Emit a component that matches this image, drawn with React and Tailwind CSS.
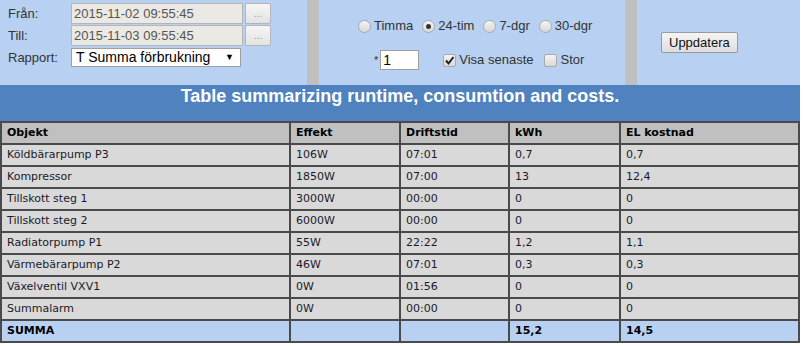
import React from 'react';

const rows = [
  { name: 'Köldbärarpump P3', effekt: '106W', tid: '07:01', kwh: '0,7', kost: '0,7' },
  { name: 'Kompressor', effekt: '1850W', tid: '07:00', kwh: '13', kost: '12,4' },
  { name: 'Tillskott steg 1', effekt: '3000W', tid: '00:00', kwh: '0', kost: '0' },
  { name: 'Tillskott steg 2', effekt: '6000W', tid: '00:00', kwh: '0', kost: '0' },
  { name: 'Radiatorpump P1', effekt: '55W', tid: '22:22', kwh: '1,2', kost: '1,1' },
  { name: 'Värmebärarpump P2', effekt: '46W', tid: '07:01', kwh: '0,3', kost: '0,3' },
  { name: 'Växelventil VXV1', effekt: '0W', tid: '01:56', kwh: '0', kost: '0' },
  { name: 'Summalarm', effekt: '0W', tid: '00:00', kwh: '0', kost: '0' },
];

const Radio = ({ label, checked }) => (
  <span className="flex items-center gap-[3px]">
    <span className="w-[13px] h-[13px] rounded-full border border-[#a9a9a9] bg-gradient-to-b from-[#f4f4f4] to-[#d8d8d8] flex items-center justify-center">
      {checked && <span className="w-[5px] h-[5px] rounded-full bg-[#333]" />}
    </span>
    <span>{label}</span>
  </span>
);

const Check = ({ label, checked }) => (
  <span className="flex items-center gap-[3px]">
    <span className="w-[13px] h-[13px] rounded-[2px] border border-[#a9a9a9] bg-gradient-to-b from-[#f4f4f4] to-[#d8d8d8] flex items-center justify-center">
      {checked && (
        <svg width="11" height="11" viewBox="0 0 11 11">
          <path d="M2 5.5 L4.5 8.5 L9.5 2" stroke="#222" strokeWidth="2" fill="none" />
        </svg>
      )}
    </span>
    <span>{label}</span>
  </span>
);

const DateField = ({ value }) => (
  <div className="flex gap-[2px]">
    <div className="w-[172px] h-[21px] border border-[#b5b5b5] bg-[#ebe9e4] text-[#555] pl-[2px] leading-[19px]">{value}</div>
    <div className="w-[26px] h-[21px] border border-[#b5b5b5] rounded-[2px] bg-gradient-to-b from-[#f6f6f6] to-[#e3e3e3] text-[#999] text-[10px] text-center leading-[19px]">...</div>
  </div>
);

export default function App() {
  const td = 'border-2 border-[#4a4a4a] pl-[5px] h-[22px] py-0';
  return (
    <div className="w-[800px] font-['Liberation_Sans',Arial,sans-serif]">
      {/* Filter panel */}
      <div className="flex h-[85px] bg-[#b8d1f2] text-[13px] text-[#333]">
        <div className="w-[307px] pl-[8px] pt-[3px]">
          <div className="flex items-center">
            <span className="w-[63px]">Från:</span>
            <DateField value="2015-11-02 09:55:45" />
          </div>
          <div className="flex items-center mt-[1px]">
            <span className="w-[63px]">Till:</span>
            <DateField value="2015-11-03 09:55:45" />
          </div>
          <div className="flex items-center mt-[2px]">
            <span className="w-[63px]">Rapport:</span>
            <div className="w-[170px] h-[19px] border border-[#a0a0a0] bg-white text-black text-[14px] pl-[4px] flex items-center justify-between pr-[6px]">
              <span>T Summa förbrukning</span>
              <span className="text-[9px]">▼</span>
            </div>
          </div>
        </div>
        <div className="w-[12px] bg-[#c0c0c0]" />
        <div className="w-[306px] pt-[18px]">
          <div className="flex items-center gap-[9px] h-[16px] pl-[39px]">
            <Radio label="Timma" />
            <Radio label="24-tim" checked />
            <Radio label="7-dgr" />
            <Radio label="30-dgr" />
          </div>
          <div className="flex items-center mt-[16px] pl-[55px]">
            <span className="text-[11px] mr-[2px]">*</span>
            <div className="w-[39px] h-[20px] border border-[#a0a0a0] bg-white text-black text-[14px] pl-[2px] leading-[18px]">1</div>
            <span className="ml-[24px]"><Check label="Visa senaste" checked /></span>
            <span className="ml-[11px]"><Check label="Stor" /></span>
          </div>
        </div>
        <div className="w-[12px] bg-[#c0c0c0]" />
        <div className="flex-1 pl-[24px] pt-[32px]">
          <div className="inline-block h-[21px] px-[7px] border border-[#9a9a9a] rounded-[2px] bg-gradient-to-b from-[#f5f5f5] to-[#dedede] text-[13px] text-[#111] leading-[19px]">Uppdatera</div>
        </div>
      </div>

      {/* Title */}
      <div className="h-[36px] bg-[#4f82be] text-white font-bold text-[18px] text-center leading-[22px]">
        Table summarizing runtime, consumtion and costs.
      </div>

      {/* Table */}
      <table className="w-[800px] table-fixed border-collapse font-['DejaVu_Sans',Verdana,sans-serif] text-[11px] text-[#1a1a2a]">
        <thead>
          <tr className="bg-[#c0c0c0] text-black font-bold">
            <th className={`${td} w-[289px] text-left`}>Objekt</th>
            <th className={`${td} w-[110px] text-left`}>Effekt</th>
            <th className={`${td} w-[109px] text-left`}>Driftstid</th>
            <th className={`${td} w-[111px] text-left`}>kWh</th>
            <th className={`${td} text-left`}>EL kostnad</th>
          </tr>
        </thead>
        <tbody>
          {rows.map((r, i) => (
            <tr key={i} className="bg-[#d9d9d9]">
              <td className={td}>{r.name}</td>
              <td className={td}>{r.effekt}</td>
              <td className={td}>{r.tid}</td>
              <td className={td}>{r.kwh}</td>
              <td className={td}>{r.kost}</td>
            </tr>
          ))}
          <tr className="bg-[#b8d1f2] font-bold text-black">
            <td className={td}>SUMMA</td>
            <td className={td}></td>
            <td className={td}></td>
            <td className={td}>15,2</td>
            <td className={td}>14,5</td>
          </tr>
        </tbody>
      </table>
    </div>
  );
}
